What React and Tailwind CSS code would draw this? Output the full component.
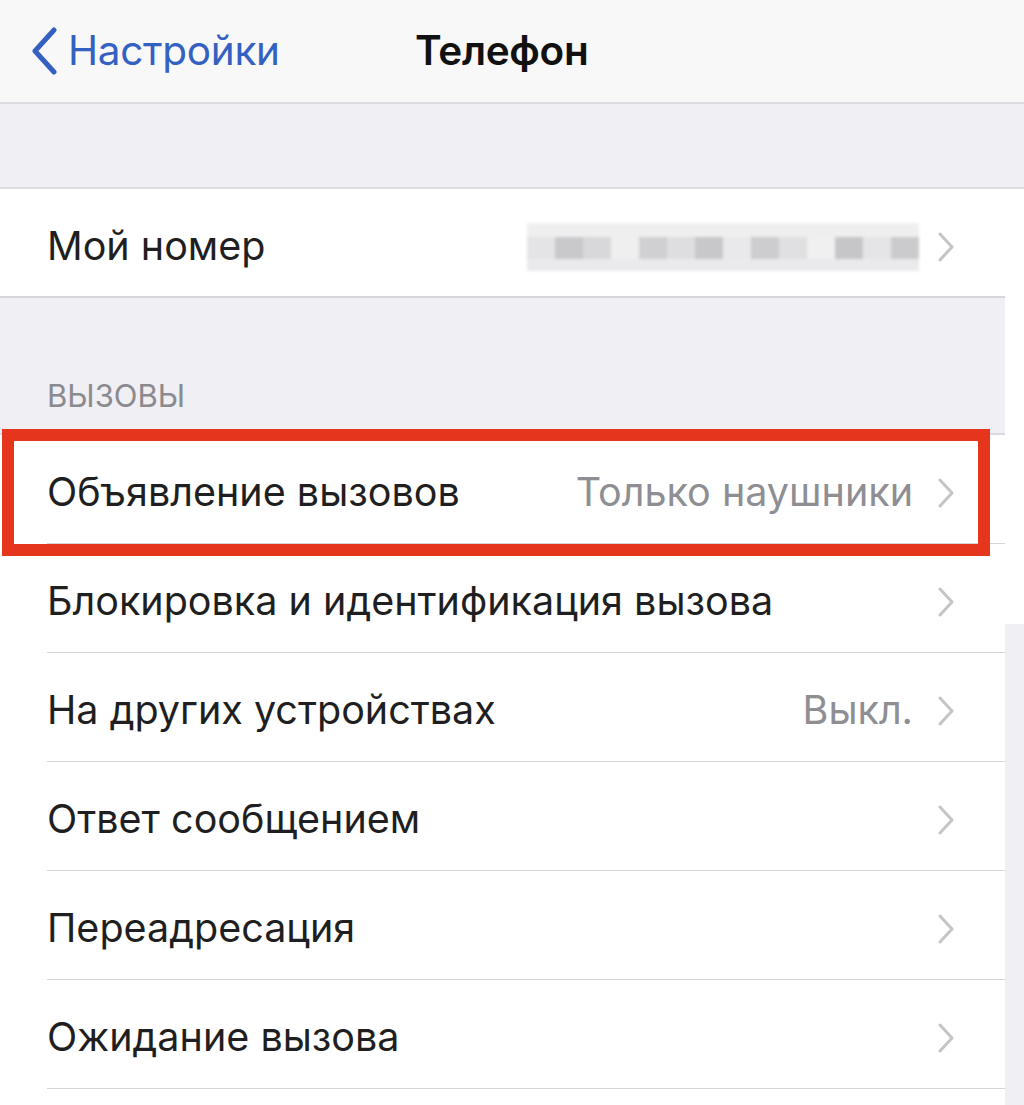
import React from 'react'

const font = { fontFamily: 'Inter, "Noto Sans", "Liberation Sans", sans-serif' }

function Chevron() {
  return (
    <svg width="18" height="30" viewBox="0 0 18 30" className="shrink-0">
      <polyline points="3,2 15,15 3,28" fill="none" stroke="#c4c4c9" strokeWidth="3" strokeLinecap="round" strokeLinejoin="round" />
    </svg>
  )
}

function BlurredNumber() {
  const blocks = ['#e4e4e6', '#c9c9cc', '#d8d8db', '#efeff0', '#d0d0d3', '#dedee0', '#c8c8cb', '#e9e9eb', '#cdcdd0', '#e0e0e2', '#f0f0f1', '#c6c6c9', '#e5e5e7', '#cbcbce']
  return (
    <div className="flex h-[48px] items-stretch blur-[1.5px]">
      {blocks.map((c, i) => (
        <div key={i} className="flex flex-col w-[28px]">
          <div className="h-[14px] bg-[#efeff0]" />
          <div className="flex-1" style={{ backgroundColor: c }} />
          <div className="h-[12px] bg-[#eaeaec]" />
        </div>
      ))}
    </div>
  )
}

function Row({ label, value }) {
  return (
    <div className="h-[109px] flex items-center pl-[47px]">
      <div className="flex-1 h-full flex items-center pt-[8px] pr-[50px] border-b border-[#d6d6da]">
        <span className="flex-1 text-[39.5px] text-[#1f1f21]">{label}</span>
        {value && <span className="text-[39.5px] text-[#8e8e93] mr-[24px]">{value}</span>}
        <Chevron />
      </div>
    </div>
  )
}

export default function App() {
  return (
    <div className="w-[1024px] h-[1105px] overflow-hidden bg-white" style={font}>
      <div className="h-[104px] bg-[#f8f8f8] border-b-2 border-[#dcdce0] flex items-center">
        <div className="w-[415px] flex items-center pl-[30px] gap-[10px]">
          <svg width="28" height="48" viewBox="0 0 28 48">
            <polyline points="24,3 5,24 24,45" fill="none" stroke="#3461c1" strokeWidth="5" strokeLinecap="round" strokeLinejoin="round" />
          </svg>
          <span className="text-[40.5px] text-[#3461c1] tracking-[-0.3px]">Настройки</span>
        </div>
        <span className="text-[40.5px] font-semibold text-[#111] tracking-[-0.3px]">Телефон</span>
      </div>
      <div className="h-[85px] bg-[#efeff4] border-b-2 border-[#dcdce0]" />
      <div className="flex">
        <div className="w-[1005px]">
          <div className="h-[109px] flex items-center pt-[8px] pl-[47px] pr-[50px] border-b-2 border-[#d6d6da]">
            <span className="flex-1 text-[39.5px] text-[#1f1f21]">Мой номер</span>
            <div className="mr-[18px]">
              <BlurredNumber />
            </div>
            <Chevron />
          </div>
          <div className="h-[137px] bg-[#efeff4] border-b-2 border-[#dcdce0] flex items-end pl-[47px] pb-[14px]">
            <span className="text-[31px] text-[#8a8a8f]">ВЫЗОВЫ</span>
          </div>
          <div className="relative">
            <div className="absolute left-[2px] top-[-6px] w-[988px] h-[127px] border-[12px] border-[#e5361d]" />
            <Row label="Объявление вызовов" value="Только наушники" />
          </div>
          <Row label="Блокировка и идентификация вызова" />
          <Row label="На других устройствах" value="Выкл." />
          <Row label="Ответ сообщением" />
          <Row label="Переадресация" />
          <Row label="Ожидание вызова" />
          <div className="h-[20px]" />
        </div>
        <div className="w-[19px] flex flex-col">
          <div className="h-[435px] bg-white" />
          <div className="flex-1 bg-[#efeff4]" />
        </div>
      </div>
    </div>
  )
}
